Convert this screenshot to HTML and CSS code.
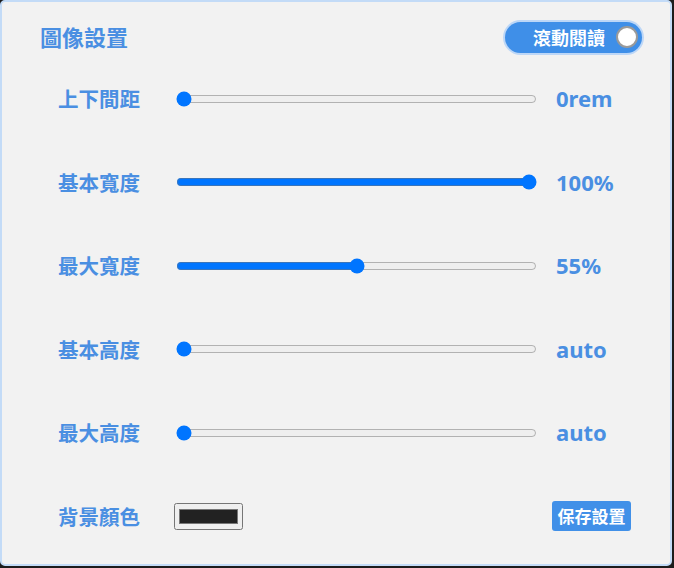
FILE: index.html
```html
<!DOCTYPE html>
<html lang="zh-Hant">
<head>
<meta charset="utf-8">
<title>圖像設置</title>
<link rel="stylesheet" href="styles.css">
</head>
<body>
<div class="panel">
  <div class="header">
    <div class="title">圖像設置</div>
    <div class="toggle">
      <span class="toggle-text">滾動閱讀</span>
      <span class="toggle-knob"></span>
    </div>
  </div>
  <div class="rows">
    <div class="row">
      <div class="label">上下間距</div>
      <input class="range" type="range" min="0" max="100" value="0">
      <div class="value">0rem</div>
    </div>
    <div class="row">
      <div class="label">基本寬度</div>
      <input class="range" type="range" min="0" max="100" value="100">
      <div class="value">100%</div>
    </div>
    <div class="row">
      <div class="label">最大寬度</div>
      <input class="range" type="range" min="0" max="100" value="50">
      <div class="value">55%</div>
    </div>
    <div class="row">
      <div class="label">基本高度</div>
      <input class="range" type="range" min="0" max="100" value="0">
      <div class="value">auto</div>
    </div>
    <div class="row">
      <div class="label">最大高度</div>
      <input class="range" type="range" min="0" max="100" value="0">
      <div class="value">auto</div>
    </div>
    <div class="row">
      <div class="label">背景顏色</div>
      <div class="swatch-cell"><input class="color" type="color" value="#222222"></div>
      <div class="save-cell"><button class="save">保存設置</button></div>
    </div>
  </div>
</div>
</body>
</html>
```

FILE: styles.css
```css
html, body {
  margin: 0;
  padding: 0;
  background: #1c1c1c;
}
body {
  width: 674px;
  height: 568px;
  font-family: "Noto Sans", "Noto Sans CJK TC", sans-serif;
}
.panel {
  box-sizing: border-box;
  width: 672px;
  height: 566px;
  background: #f2f2f2;
  border: 2px solid #c3dbf7;
  border-radius: 5px;
}
.header {
  height: 40px;
  margin-top: 15px;
  padding: 0 28px 0 38px;
  display: flex;
  align-items: center;
  justify-content: space-between;
}
.title {
  font-family: "Noto Sans CJK TC", sans-serif;
  font-weight: 700;
  font-size: 22px;
  color: #4a8fe2;
  margin-top: -2px;
}
.toggle {
  box-sizing: border-box;
  width: 137px;
  height: 31px;
  border-radius: 16px;
  background: #3f8fe8;
  box-shadow: 0 0 0 2px #bdd7f7;
  display: flex;
  align-items: center;
  justify-content: flex-end;
  padding-right: 4px;
  gap: 11px;
}
.toggle-text {
  font-family: "Noto Sans CJK TC", sans-serif;
  font-weight: 700;
  font-size: 18px;
  color: #ffffff;
}
.toggle-knob {
  box-sizing: border-box;
  width: 22px;
  height: 22px;
  border-radius: 50%;
  background: #ffffff;
  border: 2px solid #9a9a9a;
}
.rows {
  padding-left: 56px;
}
.row {
  height: 83.5px;
  display: flex;
  align-items: center;
}
.label {
  width: 118px;
  font-family: "Noto Sans CJK TC", sans-serif;
  font-weight: 700;
  font-size: 20.5px;
  color: #4a8fe2;
  margin-top: -1px;
}
.range {
  width: 361px;
  margin: 0;
  accent-color: #0075ff;
}
.value {
  margin-left: 19px;
  font-weight: 700;
  font-size: 22px;
  color: #4a8fe2;
  margin-top: -1px;
}
.swatch-cell {
  width: 376px;
  display: flex;
  align-items: center;
}
.color {
  width: 69px;
  height: 27px;
  margin: 0 0 0 -2px;
}
.save {
  font-family: "Noto Sans CJK TC", sans-serif;
  font-weight: 700;
  font-size: 17px;
  color: #ffffff;
  background: #4190e8;
  border: none;
  border-radius: 3px;
  height: 30px;
  width: 79px;
  padding: 0;
  line-height: 30px;
}
```
